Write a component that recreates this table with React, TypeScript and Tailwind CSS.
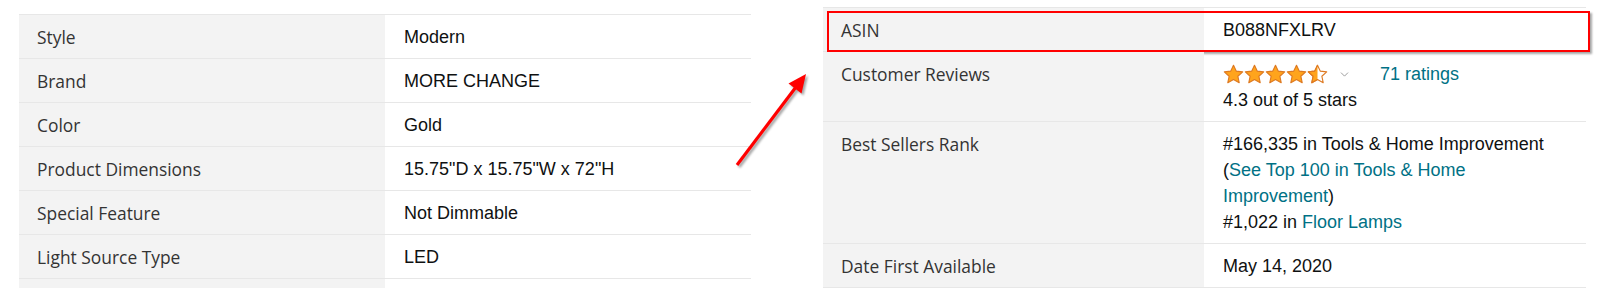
import { ChevronDown } from 'lucide-react'
import type { ReactNode } from 'react'

type Row = { label: string; value: ReactNode }

const leftRows: Row[] = [
  { label: 'Style', value: 'Modern' },
  { label: 'Brand', value: 'MORE CHANGE' },
  { label: 'Color', value: 'Gold' },
  { label: 'Product Dimensions', value: '15.75"D x 15.75"W x 72"H' },
  { label: 'Special Feature', value: 'Not Dimmable' },
  { label: 'Light Source Type', value: 'LED' },
  { label: '', value: '' },
]

const STAR = '12,1.5 15.1,8.1 22.5,9 17,14 18.5,21.4 12,17.7 5.5,21.4 7,14 1.5,9 8.9,8.1'

function Star({ half = false }: { half?: boolean }) {
  return (
    <svg width="21" height="21" viewBox="0 0 24 24" className="shrink-0">
      <defs>
        <clipPath id="halfclip">
          <rect x="0" y="0" width="12" height="24" />
        </clipPath>
      </defs>
      {half ? (
        <>
          <polygon points={STAR} fill="#fff" stroke="#de7921" strokeWidth="1.3" strokeLinejoin="round" />
          <polygon points={STAR} fill="#ffa41c" clipPath="url(#halfclip)" stroke="#de7921" strokeWidth="1.3" strokeLinejoin="round" />
        </>
      ) : (
        <polygon points={STAR} fill="#ffa41c" stroke="#de7921" strokeWidth="1.3" strokeLinejoin="round" />
      )}
    </svg>
  )
}

function Link({ children }: { children: ReactNode }) {
  return <span className="text-[#007185]">{children}</span>
}

const rightRows: Row[] = [
  { label: 'ASIN', value: 'B088NFXLRV' },
  {
    label: 'Customer Reviews',
    value: (
      <>
        <div className="flex h-[26px] items-center">
          <div className="flex">
            {[0, 1, 2, 3].map((i) => (
              <Star key={i} />
            ))}
            <Star half />
          </div>
          <ChevronDown size={13} strokeWidth={1.5} className="ml-[10px] text-[#888]" />
          <span className="ml-[29px]">
            <Link>71 ratings</Link>
          </span>
        </div>
        <div>4.3 out of 5 stars</div>
      </>
    ),
  },
  {
    label: 'Best Sellers Rank',
    value: (
      <div className="w-[330px]">
        #166,335 in Tools &amp; Home Improvement (<Link>See Top 100 in Tools &amp; Home Improvement</Link>)
        <br />
        #1,022 in <Link>Floor Lamps</Link>
      </div>
    ),
  },
  { label: 'Date First Available', value: 'May 14, 2020' },
]

function Table({ rows, labelW, highlightFirst }: { rows: Row[]; labelW: string; highlightFirst?: boolean }) {
  return (
    <div className="border-t border-[#e7e7e7]">
      {rows.map((r, i) => (
        <div key={i} className="relative flex border-b border-[#e7e7e7] leading-[26px]">
          <div className={`${labelW} shrink-0 bg-[#f3f3f3] pb-[8px] pl-[18px] pt-[9px] font-['Open_Sans',sans-serif] text-[17.4px] text-[#333]`}>
            {r.label}
          </div>
          <div className="flex-1 pb-[8px] pl-[19px] pt-[9px] font-['Liberation_Sans',Arial,sans-serif] text-[18px] text-[#0f1111]">
            {r.value}
          </div>
          {highlightFirst && i === 0 && (
            <div className="pointer-events-none absolute -bottom-[1px] -right-[4px] left-[4px] top-[3px] border-[2.5px] border-[#ff0000] shadow-[2px_2px_2px_rgba(0,0,0,0.35)]" />
          )}
        </div>
      ))}
    </div>
  )
}

export default function App() {
  return (
    <div className="relative flex h-[288px] w-[1600px] overflow-hidden bg-white">
      <div className="ml-[19px] mt-[14px] w-[732px]">
        <Table rows={leftRows} labelW="w-[366px]" />
      </div>
      <div className="ml-[72px] mt-[7px] w-[763px]">
        <Table rows={rightRows} labelW="w-[381px]" highlightFirst />
      </div>
      {/* arrow pointing to the highlighted ASIN row */}
      <svg
        width="95"
        height="110"
        viewBox="0 0 95 110"
        className="absolute left-[725px] top-[65px] drop-shadow-[2px_2px_1px_rgba(0,0,0,0.35)]"
      >
        <line x1="12" y1="100" x2="71" y2="22" stroke="#ff0000" strokeWidth="3.2" />
        <polygon points="81,9 76.5,28.5 63.5,18.5" fill="#ff0000" />
      </svg>
    </div>
  )
}
